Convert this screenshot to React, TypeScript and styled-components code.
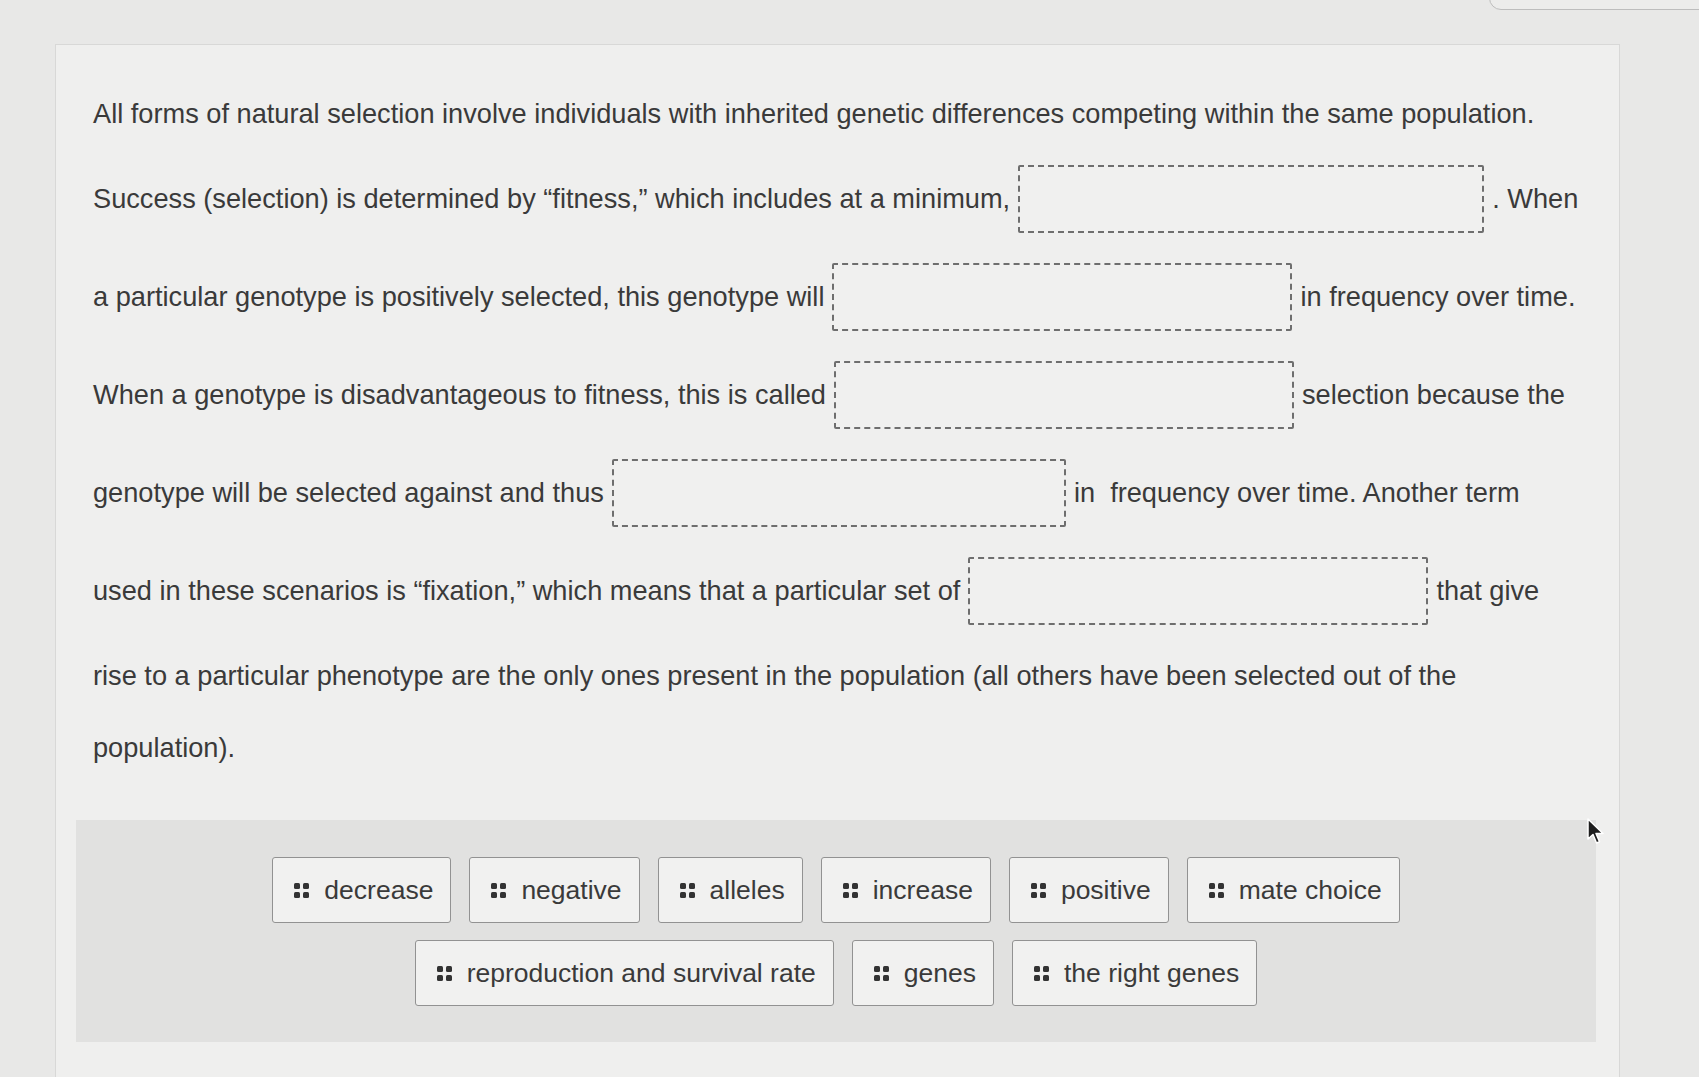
import React from 'react';
import styled, { createGlobalStyle } from 'styled-components';

const GlobalStyle = createGlobalStyle`
  html, body {
    margin: 0;
    padding: 0;
    background: #e8e8e7;
  }
  body {
    font-family: "Liberation Sans", Arial, Helvetica, sans-serif;
    color: #3a3a3a;
    overflow: hidden;
  }
`

const Page = styled.div`
  position: relative;
  width: 1699px;
  height: 1077px;
  overflow: hidden;
`

const TopBar = styled.div`
  height: 8px;
  display: flex;
  justify-content: flex-end;
`

const TopButton = styled.div`
  width: 232px;
  height: 48px;
  margin-top: -40px;
  margin-right: -24px;
  border: 1px solid #bdbdbd;
  border-radius: 12px;
  background: #ececeb;
`

const Card = styled.div`
  margin: 36px 0 0 55px;
  width: 1565px;
  min-height: 1100px;
  box-sizing: border-box;
  border: 1px solid #d8d8d7;
  background: #efefee;
  padding: 48px 0 0 0;
`

const Passage = styled.div`
  display: flex;
  flex-direction: column;
  gap: 30px;
  padding-left: 37px;
`

const Line = styled.div<{ $boxed?: boolean }>`
  display: flex;
  align-items: center;
  min-height: ${p => (p.$boxed ? '68px' : '42px')};
  font-size: 27.2px;
  white-space: pre;
`

const DropBox = styled.div<{ $w?: number }>`
  width: ${p => p.$w || 460}px;
  height: 68px;
  box-sizing: border-box;
  margin: 0 8px;
  border: 2px dashed #6e6e6e;
  border-radius: 2px;
  background: #f0f0ef;
  flex-shrink: 0;
`

const Tray = styled.div`
  margin: 51px 23px 0 20px;
  background: #e1e1e0;
  padding: 37px 40px 36px;
  display: flex;
  flex-wrap: wrap;
  justify-content: center;
  gap: 17px 18px;
`

const Chip = styled.div`
  display: flex;
  align-items: center;
  gap: 15px;
  padding: 17px 17px 17px 21px;
  border: 1px solid #929292;
  border-radius: 3px;
  background: #f1f1f0;
  font-size: 26.5px;
  line-height: 30px;
  color: #3a3a3a;
  white-space: nowrap;
`

const Cursor = styled.svg`
  position: absolute;
  left: 1586px;
  top: 818px;
`

function Grip() {
  return (
    <svg width="15" height="15" viewBox="0 0 15 15">
      <rect x="0" y="0" width="6" height="6" rx="1.5" fill="#333" />
      <rect x="9" y="0" width="6" height="6" rx="1.5" fill="#333" />
      <rect x="0" y="9" width="6" height="6" rx="1.5" fill="#333" />
      <rect x="9" y="9" width="6" height="6" rx="1.5" fill="#333" />
    </svg>
  )
}

const choices = [
  'decrease',
  'negative',
  'alleles',
  'increase',
  'positive',
  'mate choice',
  'reproduction and survival rate',
  'genes',
  'the right genes',
]

export default function App() {
  return (
    <Page>
      <GlobalStyle />
      <TopBar>
        <TopButton />
      </TopBar>
      <Card>
        <Passage>
          <Line>All forms of natural selection involve individuals with inherited genetic differences competing within the same population.</Line>
          <Line $boxed>
            Success (selection) is determined by “fitness,” which includes at a minimum,
            <DropBox $w={466} />. When
          </Line>
          <Line $boxed>
            a particular genotype is positively selected, this genotype will
            <DropBox />in frequency over time.
          </Line>
          <Line $boxed>
            When a genotype is disadvantageous to fitness, this is called
            <DropBox />selection because the
          </Line>
          <Line $boxed>
            genotype will be selected against and thus
            <DropBox $w={454} />in  frequency over time. Another term
          </Line>
          <Line $boxed>
            used in these scenarios is “fixation,” which means that a particular set of
            <DropBox />that give
          </Line>
          <Line>rise to a particular phenotype are the only ones present in the population (all others have been selected out of the</Line>
          <Line>population).</Line>
        </Passage>
        <Tray>
          {choices.map(c => (
            <Chip key={c}>
              <Grip />
              {c}
            </Chip>
          ))}
        </Tray>
      </Card>
      <Cursor width="20" height="28" viewBox="0 0 20 28">
        <path d="M2 1 L2 21 L7 16.5 L10.5 25 L13.5 23.8 L10 15.5 L17 15.5 Z" fill="#1e1e1e" stroke="#fff" strokeWidth="1.5" strokeLinejoin="round" />
      </Cursor>
    </Page>
  )
}
